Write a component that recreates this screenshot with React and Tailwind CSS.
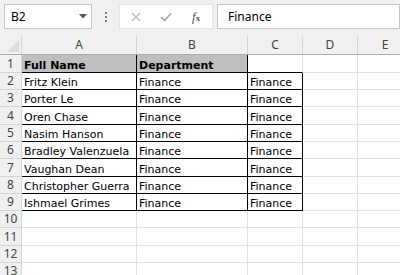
import React from 'react'

const cols = [
  { key: 'A', w: 'w-[115px]' },
  { key: 'B', w: 'w-[111px]' },
  { key: 'C', w: 'w-[55px]' },
  { key: 'D', w: 'w-[55px]' },
  { key: 'E', w: 'w-[55px]' },
]

const people = [
  'Fritz Klein',
  'Porter Le',
  'Oren Chase',
  'Nasim Hanson',
  'Bradley Valenzuela',
  'Vaughan Dean',
  'Christopher Guerra',
  'Ishmael Grimes',
]

const heights = ['h-[18px]', 'h-[17px]', 'h-[17px]', 'h-[18px]', 'h-[17px]', 'h-[17px]', 'h-[18px]', 'h-[17px]', 'h-[17px]', 'h-[17px]', 'h-[18px]', 'h-[17px]', 'h-[17px]']

const cellText = (r, c) => {
  if (r === 1) return c === 'A' ? 'Full Name' : c === 'B' ? 'Department' : ''
  if (r >= 2 && r <= 9) {
    if (c === 'A') return people[r - 2]
    if (c === 'B' || c === 'C') return 'Finance'
  }
  return ''
}

const Cell = ({ r, c, w }) => {
  const inAB = r >= 1 && r <= 9 && (c === 'A' || c === 'B')
  const inC = r >= 2 && r <= 9 && c === 'C'
  const boxed = inAB || inC
  const topBlack = r === 1 && c === 'C'
  const header = r === 1 && inAB
  return (
    <div
      className={`${w} shrink-0 flex items-end px-[2px] pb-[1px] text-[11px] leading-none text-black border-r border-b ${
        boxed ? 'border-black' : 'border-[#e1e1e1]'
      } ${topBlack ? 'border-b-black' : ''} ${header ? 'bg-[#bfbfbf] font-bold' : 'bg-white'}`}
      style={{ fontFamily: '"DejaVu Sans", Verdana, sans-serif' }}
    >
      <span className="whitespace-nowrap overflow-hidden">{cellText(r, c)}</span>
    </div>
  )
}

export default function App() {
  const rows = Array.from({ length: 13 }, (_, i) => i + 1)
  return (
    <div className="w-[400px] h-[275px] overflow-hidden bg-white" style={{ fontFamily: '"Noto Sans", "Open Sans", sans-serif' }}>
      {/* formula bar */}
      <div className="h-[36px] bg-[#f0f0f0] flex items-start pt-[4px] pl-[4px]">
        <div className="w-[88px] h-[25px] bg-white border border-[#c6c6c6] flex items-center justify-between pl-[6px] pr-[4px] text-[12px] text-black">
          <span>B2</span>
          <svg width="8" height="5" viewBox="0 0 8 5"><path d="M0 0h8L4 4.5z" fill="#555" /></svg>
        </div>
        <div className="w-[27px] h-[25px] flex flex-col items-center justify-center gap-[2px]">
          <span className="w-[2px] h-[2px] bg-[#7a7a7a]" />
          <span className="w-[2px] h-[2px] bg-[#7a7a7a]" />
          <span className="w-[2px] h-[2px] bg-[#7a7a7a]" />
        </div>
        <div className="w-[94px] h-[25px] bg-white border border-[#e4e4e4] flex items-center">
          <svg width="10" height="10" viewBox="0 0 10 10" className="ml-[11px]">
            <path d="M1 1l8 8M9 1l-8 8" stroke="#bdbdbd" strokeWidth="1.3" />
          </svg>
          <svg width="12" height="10" viewBox="0 0 12 10" className="ml-[19px]">
            <path d="M1 5l3.5 3.5L11 1.5" stroke="#a6a6a6" strokeWidth="1.6" fill="none" />
          </svg>
          <span className="ml-[20px] text-[13px] italic text-[#555]" style={{ fontFamily: '"Liberation Serif", serif' }}>
            f<span className="text-[9px] not-italic font-bold">x</span>
          </span>
        </div>
        <div className="ml-[4px] flex-1 h-[25px] bg-white border border-[#c6c6c6] flex items-center pl-[10px] text-[12px] text-black">
          Finance
        </div>
      </div>

      {/* column headers */}
      <div className="flex h-[19px] bg-[#f0f0f0] border-b border-[#ababab]">
        <div className="w-[22px] shrink-0 border-r border-[#d4d4d4] relative">
          <svg width="12" height="12" viewBox="0 0 12 12" className="absolute right-[2px] bottom-[2px]">
            <path d="M12 0V12H0z" fill="#dcdcdc" />
          </svg>
        </div>
        {cols.map((c) => (
          <div key={c.key} className={`${c.w} shrink-0 flex items-center justify-center text-[12px] text-[#444] border-r border-[#d4d4d4]`}>
            {c.key}
          </div>
        ))}
      </div>

      {/* grid rows */}
      {rows.map((r, i) => (
        <div key={r} className={`flex ${heights[i]}`}>
          <div className="w-[22px] shrink-0 bg-[#f0f0f0] border-r border-b border-[#d4d4d4] flex items-center justify-center text-[12px] text-[#444]">
            {r}
          </div>
          {cols.map((c) => (
            <Cell key={c.key} r={r} c={c.key} w={c.w} />
          ))}
        </div>
      ))}
    </div>
  )
}
